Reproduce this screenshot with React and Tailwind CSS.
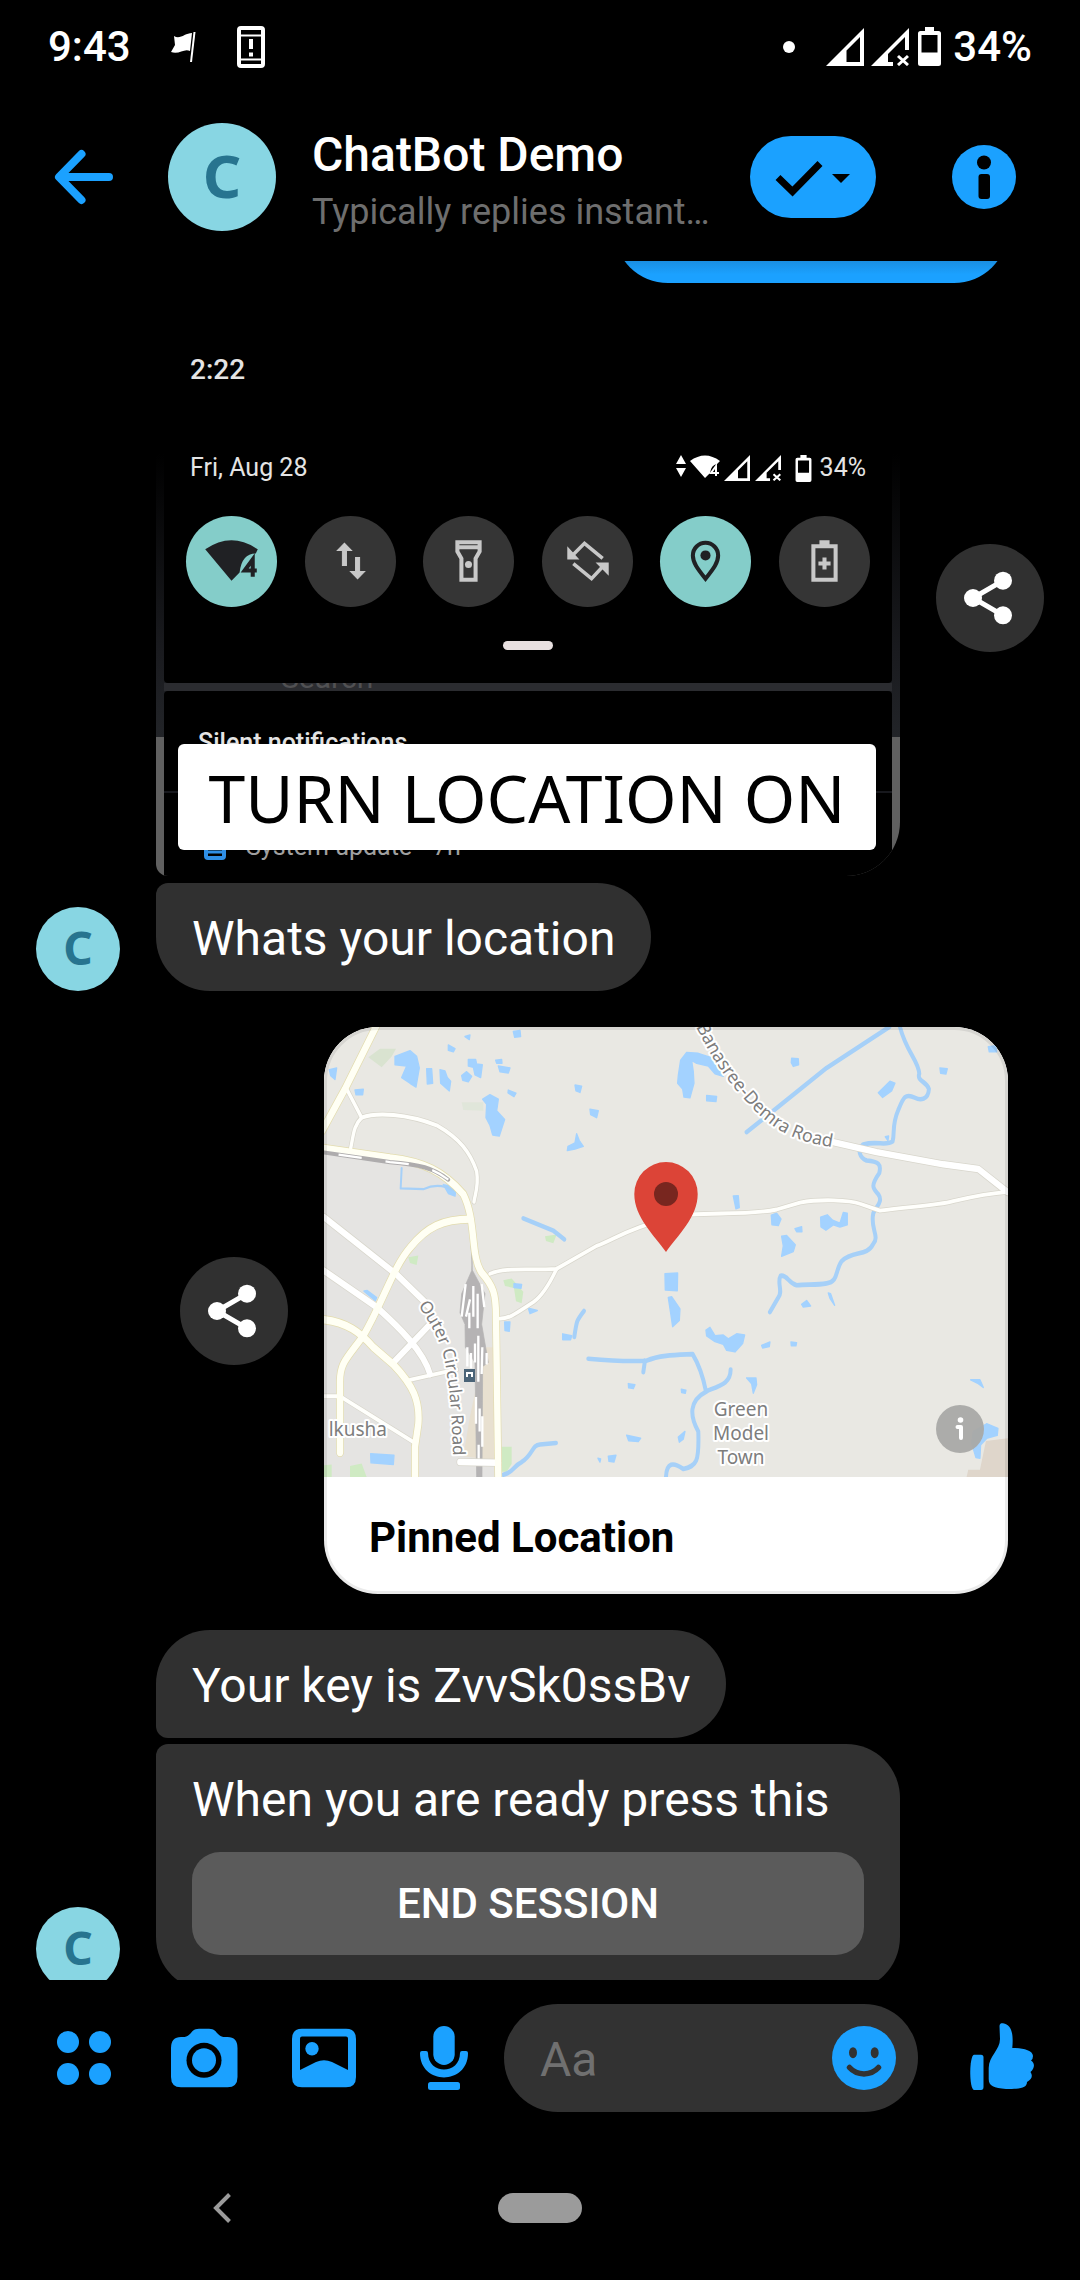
import React, { useState } from "react";

const BLUE = "#1ba1ff";

function SignalIcon({ className, crossed }) {
  return (
    <svg viewBox="0 0 38 38" className={className} fill="#fff">
      {crossed ? (
        <>
          <path d="M0 38 L38 0 V22 H34 V9 L17 26 V34 H22 V38 Z" />
          <path
            d="M27 28 L37 37 M37 28 L27 37"
            stroke="#fff"
            strokeWidth="3"
            fill="none"
          />
        </>
      ) : (
        <path
          fillRule="evenodd"
          d="M0 38 L38 0 V38 Z M20.500 22.500 V34 H34 V9 Z"
        />
      )}
    </svg>
  );
}

function BatteryIcon({ className }) {
  return (
    <svg viewBox="0 0 23 39" className={className} fill="#fff">
      <path
        fillRule="evenodd"
        d="M7 0 H16 V4 H20.500 Q23 4 23 6.500 V36.500 Q23 39 20.500 39 H2.500 Q0 39 0 36.500 V6.500 Q0 4 2.500 4 H7 Z M3.500 8 V25.500 H19.500 V8 Z"
      />
    </svg>
  );
}

function StatusBar() {
  return (
    <div className="flex h-[93px] shrink-0 items-center pr-12 pl-12 text-[42px] leading-none font-medium">
      <span>9:43</span>
      <svg viewBox="0 0 26 32" className="ml-10 h-8 w-[26px]" fill="#fff">
        <path d="M3 5 C9 9 14 2 21 2 L19 20 C13 17 8 24 0 21 L4 14 Z" />
        <path d="M23.500 1 L20 31" stroke="#fff" strokeWidth="2" />
      </svg>
      <svg
        viewBox="0 0 28 42"
        className="ml-10 h-[42px] w-7"
        fill="none"
        stroke="#fff"
      >
        <rect x="2" y="2" width="24" height="38" rx="2" strokeWidth="4" />
        <path d="M4 9.500 H24 M4 33.500 H24" strokeWidth="2" />
        <path d="M14 13 V23 M14 26.500 V30.500" strokeWidth="4" />
      </svg>
      <span className="ml-auto h-3 w-3 rounded-full bg-white" />
      <SignalIcon className="ml-[31px] h-[38px] w-[38px]" />
      <SignalIcon className="ml-[7px] h-[38px] w-[38px]" crossed />
      <BatteryIcon className="ml-[9px] h-[39px] w-[23px]" />
      <span className="ml-3">34%</span>
    </div>
  );
}

function Avatar({ small }) {
  return (
    <div
      className={
        small
          ? "flex h-[84px] w-[84px] shrink-0 items-center justify-center rounded-full bg-[#88d6e3] pb-1 font-['Noto_Sans',sans-serif] text-[46px] leading-none font-bold text-[#27748f]"
          : "flex h-[108px] w-[108px] shrink-0 items-center justify-center rounded-full bg-[#88d6e3] pb-1 font-['Noto_Sans',sans-serif] text-[60px] leading-none font-bold text-[#27748f]"
      }
    >
      C
    </div>
  );
}

function ChatHeader() {
  return (
    <header className="flex h-[168px] shrink-0 items-center">
      <button
        type="button"
        aria-label="Back"
        className="flex h-full w-[168px] shrink-0 items-center justify-center"
      >
        <svg
          viewBox="0 0 72 72"
          className="h-[72px] w-[72px]"
          fill="none"
          stroke={BLUE}
          strokeWidth="8"
          strokeLinecap="round"
          strokeLinejoin="round"
        >
          <path d="M33.500 13 L11 36 L33.500 59 M12 36 H61" />
        </svg>
      </button>
      <Avatar />
      <div className="mx-9 min-w-0 flex-1 pt-3">
        <h1 className="truncate text-[48px] leading-[58px] font-medium">
          ChatBot Demo
        </h1>
        <p className="truncate text-[36px] leading-[56px] text-[#6e6e6e]">
          Typically replies instant…
        </p>
      </div>
      <button
        type="button"
        aria-label="Mark as done"
        className="h-[82px] w-[126px] shrink-0 rounded-full bg-[#1ba1ff]"
      >
        <svg viewBox="0 0 126 82" className="h-full w-full">
          <path
            d="M28 41.500 L42.500 55.500 L70 27.500"
            fill="none"
            stroke="#000"
            strokeWidth="7"
          />
          <path d="M82 38 H100 L91 47 Z" />
        </svg>
      </button>
      <button
        type="button"
        aria-label="Conversation info"
        className="ml-3 flex h-full w-[192px] shrink-0 items-center justify-center"
      >
        <svg viewBox="0 0 64 64" className="h-16 w-16">
          <circle cx="32" cy="32" r="32" fill={BLUE} />
          <circle cx="32" cy="17.500" r="7" />
          <rect x="26.500" y="29" width="11.500" height="25" rx="3" />
        </svg>
      </button>
    </header>
  );
}

function ShareButton() {
  return (
    <button
      type="button"
      aria-label="Share"
      className="h-[108px] w-[108px] shrink-0 rounded-full bg-[#303030]"
    >
      <svg viewBox="0 0 108 108" className="h-full w-full" fill="#fff">
        <path
          d="M67 36.700 L37 54 L67 71.300"
          fill="none"
          stroke="#fff"
          strokeWidth="5"
        />
        <circle cx="37" cy="54" r="9" />
        <circle cx="67" cy="36.700" r="9" />
        <circle cx="67" cy="71.300" r="9" />
      </svg>
    </button>
  );
}

const quickSettings = [
  {
    name: "wifi",
    on: true,
    icon: (
      <>
        <path
          d="M19 33 Q45 15 71 33 L69 37 Q55 37 53 56 L45 64 Z"
          fill="#202124"
        />
        <path
          d="M66 60 V43 L58 54 H70"
          fill="none"
          stroke="#202124"
          strokeWidth="4"
        />
      </>
    ),
  },
  {
    name: "data",
    icon: (
      <path
        d="M37 49 V34 H32 L39 27 L46 34 H41 V49 Z M50 41 H54 V55 H59 L52 62 L45 55 H50 Z"
        fill="#c8c8c8"
        stroke="#c8c8c8"
      />
    ),
  },
  {
    name: "flashlight",
    icon: (
      <>
        <path
          d="M34 26 H56 V35 L52 42 V63 H38 V42 L34 35 Z M34 31 H56"
          fill="none"
          stroke="#c8c8c8"
          strokeWidth="4"
        />
        <circle cx="45" cy="48" r="3.500" fill="#c8c8c8" />
      </>
    ),
  },
  {
    name: "rotate",
    icon: (
      <>
        <path
          d="M29 40 L42 27 L60 42 M62 48 L49 62 L31 47"
          fill="none"
          stroke="#c8c8c8"
          strokeWidth="3.500"
        />
        <path d="M25 30 V43 H37 Z M66 59 V46 H53 Z" fill="#c8c8c8" />
      </>
    ),
  },
  {
    name: "location",
    on: true,
    icon: (
      <>
        <path
          d="M45 62 C37 52 32.500 46 32.500 39 A12.500 12.500 0 0 1 57.500 39 C57.500 46 53 52 45 62 Z"
          fill="none"
          stroke="#202124"
          strokeWidth="4"
        />
        <circle cx="45" cy="39" r="5" fill="#202124" />
      </>
    ),
  },
  {
    name: "battery saver",
    icon: (
      <path
        d="M34 30 H56 V63 H34 Z M40 26 H50 M45 41 V53 M39 47 H51"
        fill="none"
        stroke="#c8c8c8"
        strokeWidth="4"
      />
    ),
  },
];

function LocationHint() {
  return (
    <figure className="relative h-[556px] min-w-0 flex-1 overflow-hidden rounded-[54px] rounded-bl-xl bg-[linear-gradient(to_bottom,#000_24%,#1a1b1f_60%,#222428_75%,#606060_75%)] px-2 text-[#e4e4e4]">
      <div className="h-[363px] rounded-b bg-black px-[22px] pt-8">
        <p className="px-1 text-[28px] leading-9 font-medium">2:22</p>
        <div className="mt-16 flex h-8 items-center px-1 text-[25px]">
          <span>Fri, Aug 28</span>
          <svg viewBox="0 0 44 26" className="ml-auto h-[26px] w-11" fill="#fff">
            <path d="M5 0 L10 9 H0 Z M5 22 L10 13 H0 Z" />
            <path d="M14 6 Q29 -5 44 6 L41 9 Q35 10 34 18 L29 23 Z" />
            <path
              d="M40 21 V11 L35 18 H43"
              fill="none"
              stroke="#fff"
              strokeWidth="2"
            />
          </svg>
          <SignalIcon className="ml-1 h-[26px] w-[26px]" />
          <SignalIcon className="ml-[5px] h-[26px] w-[26px]" crossed />
          <BatteryIcon className="ml-[14px] h-[27px] w-[17px]" />
          <span className="ml-2">34%</span>
        </div>
        <div className="mt-8 flex justify-between">
          {quickSettings.map((item) => (
            <span
              key={item.name}
              className={
                item.on
                  ? "h-[91px] w-[91px] rounded-full bg-[#84cdc9]"
                  : "h-[91px] w-[91px] rounded-full bg-[#353535]"
              }
            >
              <svg viewBox="0 0 90 90" className="h-full w-full">
                {item.icon}
              </svg>
            </span>
          ))}
        </div>
        <div className="mx-auto mt-[34px] h-[9px] w-[50px] rounded-full bg-[#e8e0e0]" />
      </div>
      <div className="flex h-2 items-end overflow-hidden bg-[#2b2c30] pb-2 pl-[117px] text-[30px] leading-[10px] text-[#515153]">
        Search
      </div>
      <div className="h-[185px] rounded-t bg-black">
        <p className="px-[34px] pt-9 text-[25px] leading-8 font-medium">
          Silent notifications
        </p>
        <div className="mt-8 border-t-2 border-[#17181d] pt-[38px]">
          <div className="flex h-8 items-center px-10 text-[25px] text-[#a0a0a0]">
            <svg viewBox="0 0 22 26" className="h-[26px] w-[22px]">
              <rect
                x="2"
                y="2"
                width="18"
                height="22"
                rx="2"
                fill="none"
                stroke="#2f8fe6"
                strokeWidth="4"
              />
              <path d="M2 18 H20" stroke="#2f8fe6" strokeWidth="3" />
            </svg>
            <span className="ml-5">System update • 7h</span>
          </div>
        </div>
      </div>
      <figcaption className="absolute right-6 bottom-[26px] left-[22px] flex h-[106px] items-center justify-center rounded-md bg-white font-['Noto_Sans',sans-serif] text-[66px] leading-none whitespace-nowrap text-black">
        TURN LOCATION ON
      </figcaption>
    </figure>
  );
}

const ponds = [
  "M255,120 L300,105 L320,120 L328,150 L318,200 L300,190 L275,175 L290,145 L255,142 Z",
  "M350,152 H365 L368,190 L352,192 Z",
  "M390,155 L405,158 L412,175 L422,185 L418,210 L392,190 Z",
  "M475,128 L497,128 L500,140 L517,142 L512,175 L495,168 L490,148 L475,145 Z",
  "M455,170 L470,160 L485,172 L475,186 L458,182 Z",
  "M565,145 L600,150 L595,163 L570,160 Z M557,130 L575,128 L576,138 L560,138 Z",
  "M518,232 L540,220 L565,232 L560,262 L584,285 L568,328 L548,325 L540,300 L528,280 L530,245 Z",
  "M595,208 L618,216 L612,225 L594,215 Z M415,90 L435,100 L430,108 L415,104 Z",
  "M465,68 L480,64 L478,76 Z M610,55 L630,52 L632,68 L614,70 Z M135,208 L160,206 L158,220 L138,220 Z",
  "M58,155 L80,150 L75,180 L62,170 Z M795,195 L815,198 L810,214 L798,210 Z",
  "M840,258 L865,262 L860,280 L842,272 Z M800,322 L808,340 L820,355 L795,362 L772,366 L774,355 L795,346 Z",
  "M400,455 L438,462 L435,485 L415,478 Z M162,733 L172,732 L200,750 L196,758 Z",
  "M1065,688 L1103,686 L1102,732 L1066,730 Z M1075,750 L1085,748 L1110,780 L1108,810 L1088,826 L1082,790 Z",
  "M584,814 L600,814 L598,838 L585,836 Z M655,778 L682,784 L660,792 Z M612,714 L635,716 L633,726 L612,724 Z",
  "M758,845 L785,850 L782,860 L758,860 Z M955,975 L975,978 L970,988 L956,986 Z",
  "M950,1110 L992,1118 L985,1126 L956,1124 Z M182,1158 L252,1162 L250,1186 L183,1182 Z",
  "M895,1165 L918,1162 L912,1180 L897,1178 Z M864,1170 L872,1172 L870,1180 Z",
  "M1105,170 L1112,130 L1130,110 L1165,112 L1200,122 L1245,160 L1240,172 L1215,165 L1195,145 L1160,138 L1145,130 L1150,160 L1152,190 L1140,228 L1122,226 L1118,205 L1103,190 Z",
  "M1190,222 L1220,225 L1218,238 L1190,236 Z M1445,125 L1465,126 L1466,142 L1450,146 L1444,136 Z",
  "M1705,215 L1740,185 L1755,190 L1745,210 L1718,227 Z M1890,150 L1912,152 L1908,166 L1892,164 Z",
  "M1270,485 L1285,484 L1288,515 L1278,518 Z M1384,535 L1400,530 L1413,545 L1405,562 L1386,560 Z",
  "M1415,590 L1430,588 L1456,612 L1450,630 L1415,642 L1420,615 Z M1455,570 L1475,565 L1476,578 L1460,578 Z",
  "M1532,540 L1552,534 L1568,548 L1590,556 L1600,528 L1612,530 L1612,560 L1590,566 L1570,560 L1548,574 L1533,565 Z",
  "M1188,835 L1200,828 L1215,850 L1240,848 L1255,858 L1280,845 L1304,848 L1298,870 L1275,892 L1250,888 L1240,872 L1215,865 L1190,850 Z",
  "M1310,960 H1338 L1340,978 L1330,1000 L1325,975 Z M1355,875 L1380,866 L1378,878 L1358,882 Z",
  "M1475,768 L1490,758 L1502,772 L1480,775 Z M1555,738 L1562,740 L1574,770 L1560,752 Z M1443,866 L1460,868 L1458,876 L1444,876 Z",
  "M1105,1115 L1125,1100 L1120,1120 L1108,1128 Z M1114,990 L1128,992 L1126,1000 L1115,998 Z",
  "M1990,1100 L2030,1080 L2064,1092 L2062,1110 L2030,1118 L2012,1135 L2010,1170 L1998,1168 L1985,1130 Z",
  "M1982,965 L2010,965 L2020,985 L2005,975 Z M1726,330 L1736,328 L1734,340 Z M2035,95 L2058,92 L2060,108 L2038,108 Z",
];

const rivers = [
  "M1310,318 L1400,255 L1550,150 L1738,43",
  "M1770,43 C1790,110 1825,130 1828,165 C1820,185 1850,185 1857,205 C1855,235 1830,235 1815,228 C1785,215 1780,228 1765,260 C1745,300 1755,320 1748,342 C1730,355 1700,340 1660,350 C1640,365 1650,385 1670,392 C1705,395 1715,400 1708,425 C1680,460 1690,465 1705,480 C1720,500 1700,510 1690,530 C1680,570 1710,590 1690,610 C1670,645 1630,625 1595,655 C1575,680 1585,710 1550,713 C1520,718 1490,715 1460,718 C1435,712 1432,690 1412,693 C1400,710 1420,735 1405,750 L1380,788",
  "M835,910 C900,915 950,918 1010,915 C1050,900 1100,900 1148,898 C1170,930 1180,960 1188,995 C1230,980 1262,975 1262,938",
  "M1190,995 C1135,1020 1140,1060 1165,1100 C1168,1180 1160,1190 1120,1198 C1090,1180 1070,1180 1068,1219",
  "M580,1213 C610,1208 610,1190 635,1180 C670,1160 665,1136 690,1134 L738,1130",
  "M640,543 L730,575 L763,598",
  "M793,853 C800,810 800,810 822,785 M1005,915 L1000,945",
];

const streets = [
  "M110,205 L155,280 C200,265 290,270 380,300 C450,335 480,370 500,420 C507,460 495,480 492,500",
  "M155,280 C130,300 130,330 122,360",
  "M540,688 C590,670 650,680 740,675 L860,615 C910,600 950,570 1068,545 C1150,520 1290,540 1400,520 L1470,502 C1530,492 1620,495 1650,505 L1710,523 C1800,512 1880,510 1930,498 C1980,488 2030,478 2094,474",
  "M740,675 C710,730 690,750 670,762 C620,790 600,805 570,805",
  "M300,965 L440,938",
  "M42,1008 H90 L315,1130",
];

const wideStreets = [
  "M42,540 L260,690 L360,775",
  "M42,680 L200,775 C270,830 340,890 360,950",
  "M250,920 L360,820",
  "M1560,342 L1700,370 L1900,402 L2005,414 L2092,474",
  "M450,1180 L565,1182",
];

const mainRoads = [
  "M205,30 L105,205 L36,315",
  "M42,360 L240,385 C340,395 400,420 460,480 C500,550 480,640 515,685 C550,720 558,740 558,800 L565,1225",
  "M480,545 C400,545 350,565 300,620 C250,670 220,760 160,850 C110,910 90,920 90,970 V1155",
  "M42,808 C110,815 150,840 190,880 L250,925 C310,980 330,1020 325,1080 L315,1140 V1225",
];

function MapPicture() {
  const labelHalo = {
    stroke: "#fff",
    strokeWidth: 4,
    strokeLinejoin: "round",
    paintOrder: "stroke",
  };

  return (
    <svg
      viewBox="0 0 684 450"
      className="block w-full bg-[#e9e8e3] font-['Noto_Sans',sans-serif]"
    >
      {/* map data is kept in survey units, this brings it to the 684x450 sheet */}
      <g
        transform="translate(-14 -16.500) scale(0.3333 0.3827)"
        fill="none"
        strokeLinecap="round"
        strokeLinejoin="round"
      >
        <path
          d="M42,360 C340,385 440,420 480,545 C490,680 540,690 560,800 V1219 H42 Z"
          fill="#e5e4e2"
        />
        <path d="M525,880 L550,880 L556,1175 L460,1165 L480,1060 Z" fill="#e8e0d0" />
        <path d="M175,122 L210,100 L258,100 L245,120 L215,148 Z" fill="#d9e3d0" />
        <path d="M455,240 H520 V262 L460,260 Z" fill="#e0e6da" />
        <path
          d="M580,705 L605,700 L640,735 L635,765 L618,760 L612,725 L585,720 Z M705,590 L740,585 L730,608 L708,602 Z M575,1140 H605 V1185 L590,1205 H575 Z M120,1190 L155,1184 L170,1219 H120 Z M42,1188 L65,1186 V1219 H42 Z M295,645 L325,640 L320,665 L300,660 Z"
          fill="#cfeac3"
        />
        <path d="M1970,1219 L1975,1200 L2010,1200 L2028,1125 L2094,1118 V1219 Z" fill="#dfd6cb" />
        {ponds.map((d) => (
          <path key={d} d={d} fill="#a3d2ff" stroke="#a3d2ff" strokeWidth="4" />
        ))}
        {rivers.map((d) => (
          <path key={d} d={d} stroke="#a6d0f8" strokeWidth="12" />
        ))}
        <path
          d="M275,412 L272,465 L340,467 C370,455 400,455 430,470"
          stroke="#a6d0f8"
          strokeWidth="6"
        />

        {/* railway and its yard */}
        <path
          d="M485,550 C478,600 488,640 485,680 L455,740 L450,790 L465,820 L466,880 L495,920 L500,1219 L516,1219 L518,930 L535,920 L515,820 L525,740 L488,680"
          fill="#b5b3b4"
          stroke="#b5b3b4"
          strokeWidth="2"
        />
        <path
          d="M467,715 L455,800 M480,755 L468,800 M490,720 V800 M503,740 V830 M515,715 L523,775 M478,790 V830 M472,880 V930 M483,895 V935 M495,870 V920 M505,850 V970 M517,880 L515,950 M530,895 V925 M498,1010 V1080 M509,1040 V1100 M517,1060 V1140 M506,1135 V1190"
          stroke="#fff"
          strokeWidth="7"
          strokeLinecap="butt"
        />

        {streets.map((d) => (
          <path key={d} d={d} stroke="#d8d6cc" strokeWidth="14" />
        ))}
        {wideStreets.map((d) => (
          <path key={d} d={d} stroke="#d8d6cc" strokeWidth="21" />
        ))}
        {mainRoads.map((d) => (
          <path key={d} d={d} stroke="#e3dcae" strokeWidth="23" />
        ))}
        {streets.map((d) => (
          <path key={d} d={d} stroke="#fffffc" strokeWidth="10" />
        ))}
        {wideStreets.map((d) => (
          <path key={d} d={d} stroke="#fff" strokeWidth="17" />
        ))}
        {mainRoads.map((d) => (
          <path key={d} d={d} stroke="#fffff4" strokeWidth="19" />
        ))}

        <path
          d="M42,371 L240,396 C330,402 370,412 415,442"
          stroke="#aeacad"
          strokeWidth="11"
        />
        <path
          d="M42,371 L240,396 C330,402 370,412 415,442"
          stroke="#fff"
          strokeWidth="6"
          strokeLinecap="butt"
          strokeDasharray="70 72"
          strokeDashoffset="98"
        />
      </g>

      {/* station */}
      <rect x="140" y="342" width="11" height="13" fill="#4b6478" />
      <path d="M142 345 H149 V350 H142 Z" fill="#fff" />
      <path d="M144 347 H147 V350 H144 Z" fill="#4b6478" />

      <path
        id="circular-road"
        d="M94 278 C110 302 120 320 123 348 C127 370 128 400 130 450"
        fill="none"
      />
      <path
        id="demra-road"
        d="M352 -44 C372 2 390 40 420 72 C446 102 468 114 508 120"
        fill="none"
      />
      <g fill="#7d7d7d" style={labelHalo}>
        <text fontSize="17">
          <textPath href="#circular-road">Outer Circular Road</textPath>
        </text>
        <text fontSize="18" textAnchor="end">
          <textPath href="#demra-road" startOffset="100%">
            Banasree-Demra Road
          </textPath>
        </text>
        <text fontSize="19" x="63" y="409" textAnchor="end">
          lkusha
        </text>
        <text fontSize="19" textAnchor="middle">
          <tspan x="417" y="389">Green</tspan>
          <tspan x="417" y="413">Model</tspan>
          <tspan x="417" y="437">Town</tspan>
        </text>
      </g>

      <circle cx="636" cy="402" r="24" fill="#a9a9a7" fillOpacity="0.95" />
      <circle cx="636.500" cy="393" r="2.800" fill="#fff" />
      <path
        d="M633.500 400 H637 V411"
        fill="none"
        stroke="#fff"
        strokeWidth="4"
        strokeLinecap="round"
        strokeLinejoin="round"
      />

      <path
        d="M342 225 C330 208 310.300 190 310.300 167 A31.700 32 0 0 1 373.700 167 C373.700 190 354 208 342 225 Z"
        fill="#dc4437"
      />
      <circle cx="342" cy="167" r="12" fill="#78261f" />
    </svg>
  );
}

function LocationCard() {
  return (
    <a
      href="#location"
      className="relative block min-w-0 flex-1 overflow-hidden rounded-[54px] bg-white"
    >
      <MapPicture />
      <p className="px-[45px] pt-9 pb-[31px] text-[42px] leading-[50px] font-bold text-black">
        Pinned Location
      </p>
      <span className="absolute inset-0 rounded-[54px] border-[3px] border-black/8" />
    </a>
  );
}

function Composer() {
  const [message, setMessage] = useState("");

  return (
    <form
      onSubmit={(e) => e.preventDefault()}
      className="flex shrink-0 items-center py-6 pl-6"
    >
      <button
        type="button"
        aria-label="More"
        className="flex w-[120px] shrink-0 justify-center"
      >
        <svg viewBox="0 0 72 72" className="h-[72px] w-[72px]" fill={BLUE}>
          <circle cx="20" cy="20" r="11" />
          <circle cx="52" cy="20" r="11" />
          <circle cx="20" cy="52" r="11" />
          <circle cx="52" cy="52" r="11" />
        </svg>
      </button>
      <button
        type="button"
        aria-label="Camera"
        className="flex w-[120px] shrink-0 justify-center"
      >
        <svg viewBox="0 0 72 72" className="h-[72px] w-[72px]">
          <path
            d="M13 15 H15 C24 15 22 6.700 31 6.700 H41 C50 6.700 48 15 57 15 H59.500 Q69.500 15 69.500 26 V55 Q69.500 65.300 59.500 65.300 H13 Q3 65.300 3 55 V26 Q3 15 13 15 Z"
            fill={BLUE}
          />
          <circle cx="36" cy="38.300" r="17.500" />
          <circle cx="36" cy="38.300" r="12" fill={BLUE} />
        </svg>
      </button>
      <button
        type="button"
        aria-label="Gallery"
        className="flex w-[120px] shrink-0 justify-center"
      >
        <svg viewBox="0 0 72 72" className="h-[72px] w-[72px]" fill={BLUE}>
          <path
            fillRule="evenodd"
            d="M14 6.700 H58 Q68 6.700 68 17 V55 Q68 65.300 58 65.300 H14 Q4 65.300 4 55 V17 Q4 6.700 14 6.700 Z M14 14.500 Q12 14.500 12 16.500 V48 L28 40 Q36 36.500 44 40 L60 48 V16.500 Q60 14.500 58 14.500 Z"
          />
          <circle cx="24" cy="26.700" r="6.700" />
        </svg>
      </button>
      <button
        type="button"
        aria-label="Voice message"
        className="flex w-[120px] shrink-0 justify-center"
      >
        <svg viewBox="0 0 72 72" className="h-[72px] w-[72px]" fill={BLUE}>
          <rect x="25.300" y="4" width="21.400" height="39" rx="10.700" />
          <path d="M14 29 H18 Q20 29 20 31 C20 53 52 53 52 31 Q52 29 54 29 H58 Q60 29 60 31 C60 63.500 12 63.500 12 31 Q12 29 14 29 Z" />
          <rect x="20" y="60" width="32" height="8" rx="2.500" />
        </svg>
      </button>
      <div className="flex h-[108px] min-w-0 flex-1 items-center rounded-full bg-[#323232] pr-[22px] pl-9">
        <input
          type="text"
          aria-label="Message"
          placeholder="Aa"
          value={message}
          onChange={(e) => setMessage(e.target.value)}
          className="min-w-0 flex-1 pt-1 text-[48px] leading-[60px] placeholder-[#707070] outline-none"
        />
        <button type="button" aria-label="Emoji" className="shrink-0">
          <svg viewBox="0 0 64 64" className="h-16 w-16">
            <circle cx="32" cy="32" r="32" fill={BLUE} />
            <ellipse cx="21" cy="26.700" rx="4" ry="5.500" fill="#323232" />
            <ellipse cx="42.700" cy="26.700" rx="4" ry="5.500" fill="#323232" />
            <path
              d="M17.500 41.500 C25 50 39 50 46.500 41.500"
              fill="none"
              stroke="#323232"
              strokeWidth="5.500"
              strokeLinecap="round"
            />
          </svg>
        </button>
      </div>
      <button
        type="submit"
        aria-label="Like"
        className="flex w-[162px] shrink-0 justify-center pl-1.5"
      >
        <svg viewBox="0 0 72 72" className="h-[72px] w-[72px]" fill={BLUE}>
          <path d="M8 32.700 H15 Q17.500 32.700 17.500 35.500 V65 Q17.500 68 15 68 H8 C3 67 3 34 8 32.700 Z" />
          <path d="M22.700 46 C22.700 34 34 28 34 17 L33.500 4 C33.500 1 36 1 37 1.200 C46 3 47.500 12 46.300 26 C55 25.800 67 28 67 34 Q67 37 65 38.500 C69 41 69 46 64.500 50 C67 54 66 57 61 60 C61 66 54 67.300 40 67 C28 66 22.700 64 22.700 57 Z" />
        </svg>
      </button>
    </form>
  );
}

function NavigationBar() {
  return (
    <nav className="grid h-36 shrink-0 grid-cols-[1fr_84px_1fr] items-center">
      <button
        type="button"
        aria-label="Back"
        className="flex justify-center pr-[54px]"
      >
        <svg
          viewBox="0 0 18 30"
          className="h-[30px] w-[18px]"
          fill="none"
          stroke="#9b9b9b"
          strokeWidth="4"
        >
          <path d="M16.500 1.500 L3 15 L16.500 28.500" />
        </svg>
      </button>
      <button
        type="button"
        aria-label="Home"
        className="h-[30px] rounded-full bg-[#9b9b9b]"
      />
    </nav>
  );
}

function App() {
  return (
    <div className="flex h-screen flex-col bg-black font-['Roboto',sans-serif] text-white">
      <StatusBar />
      <ChatHeader />
      <main className="min-h-0 flex-1 overflow-hidden">
        {/* last outgoing message, mostly scrolled under the header */}
        <div className="-mt-[86px] mr-[72px] ml-auto h-[108px] w-[394px] rounded-[54px] bg-[linear-gradient(to_bottom,#1a8fe2_80%,#1ba1ff_92%)]" />

        <div className="mt-[37px] flex items-center gap-9 pr-9 pl-[156px]">
          <LocationHint />
          <ShareButton />
        </div>

        <div className="mt-[7px] flex items-end gap-9 pl-9">
          <Avatar small />
          <p className="rounded-[54px] rounded-tl-xl bg-[#303030] px-9 pt-[26px] pb-[22px] text-[48px] leading-[60px]">
            Whats your location
          </p>
        </div>

        <div className="mt-9 flex items-center gap-9 pr-[72px] pl-[180px]">
          <ShareButton />
          <LocationCard />
        </div>

        <div className="mt-9 flex pl-[156px]">
          <p className="rounded-[54px] rounded-bl-xl bg-[#303030] px-9 pt-[26px] pb-[22px] text-[48px] leading-[60px]">
            Your key is ZvvSk0ssBv
          </p>
        </div>

        <div className="mt-1.5 flex items-end gap-9 pr-[180px] pl-9">
          <Avatar small />
          <div className="min-w-0 flex-1 rounded-[54px] rounded-tl-xl bg-[#313131] px-9 pb-9">
            <p className="pt-[26px] pb-[22px] text-[48px] leading-[60px]">
              When you are ready press this
            </p>
            <button
              type="button"
              className="block h-[103px] w-full rounded-[28px] bg-[#5b5b5b] text-[42px] font-medium"
            >
              END SESSION
            </button>
          </div>
        </div>
      </main>
      <Composer />
      <NavigationBar />
    </div>
  );
}

export default App;
